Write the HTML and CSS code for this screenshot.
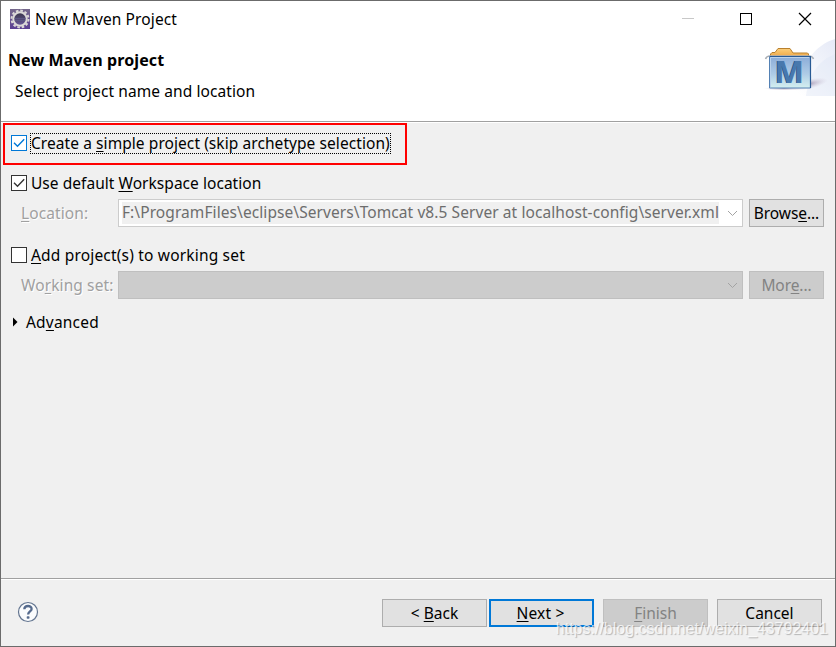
FILE: index.html
```html
<!DOCTYPE html>
<html lang="en">
<head>
    <meta charset="UTF-8" />
    <meta name="viewport" content="width=device-width, initial-scale=1.0" />
    <title>New Maven Project</title>
    <link rel="stylesheet" href="styles.css">
</head>
<body>

    <div class="window">
        <div class="titlebar">
            <svg class="app-icon" width="20" height="20" viewBox="0 0 20 20">
                <defs>
                    <linearGradient id="appBg" x1="0" y1="0" x2="0" y2="1">
                        <stop offset="0" stop-color="#75678b" />
                        <stop offset="1" stop-color="#5b3f93" />
                    </linearGradient>
                    <linearGradient id="appCore" x1="0" y1="0" x2="0" y2="1">
                        <stop offset="0" stop-color="#393449" />
                        <stop offset="1" stop-color="#69599b" />
                    </linearGradient>
                </defs>
                <rect width="20" height="20" fill="url(#appBg)" />
                <circle cx="10" cy="10" r="8.5" fill="none" stroke="#dcd9d8" stroke-width="2" stroke-dasharray="2.6 1.85" />
                <circle cx="10" cy="10" r="6.7" fill="url(#appCore)" stroke="#dcd9d8" stroke-width="2" />
                <path d="M4.500 9.500h11M4.800 11.500h10.400" stroke="#5d5a86" stroke-width=".8" />
            </svg>
            <span class="title">New Maven Project</span>
            <svg class="controls" width="132" height="14" viewBox="0 0 132 14" fill="none" shape-rendering="crispEdges">
                <path d="M0 6.500h12" stroke="#c8c8c8" />
                <rect x="58.500" y="1.500" width="11" height="11" stroke="#000" />
                <path d="M117 1l12 12M129 1l-12 12" stroke="#000" shape-rendering="auto" stroke-width="1.200" />
            </svg>
        </div>

        <div class="banner">
            <div class="banner-text">
                <h1>New Maven project</h1>
                <p>Select project name and location</p>
            </div>
            <svg class="banner-icon" width="80" height="66" viewBox="0 0 80 66">
                <defs>
                    <linearGradient id="swoosh" x1="0" y1="1" x2="1" y2="0">
                        <stop offset=".2" stop-color="#ffffff" />
                        <stop offset="1" stop-color="#e6eaf7" />
                    </linearGradient>
                    <linearGradient id="box" x1="0" y1="0" x2="0" y2="1">
                        <stop offset="0" stop-color="#8bacd8" />
                        <stop offset=".55" stop-color="#aecbe6" />
                        <stop offset="1" stop-color="#d5f0f0" />
                    </linearGradient>
                    <linearGradient id="folder" x1="0" y1="0" x2="0" y2="1">
                        <stop offset="0" stop-color="#fbcf7b" />
                        <stop offset="1" stop-color="#eda23f" />
                    </linearGradient>
                    <radialGradient id="shade">
                        <stop offset="0" stop-color="#8c7c9c" stop-opacity=".7" />
                        <stop offset="1" stop-color="#c9bcd0" stop-opacity="0" />
                    </radialGradient>
                </defs>
                <path d="M22 60C36 55 40 40 52 24C60 12 69 6 79 3V60Z" fill="url(#swoosh)" />
                <path d="M50 60C53 38 62 25 79 18V60Z" fill="#dfe5f5" opacity=".4" />
                <ellipse cx="53" cy="48" rx="19" ry="5" fill="url(#shade)" transform="rotate(-12 53 48)" />
                <ellipse cx="28" cy="52.500" rx="20" ry="2" fill="url(#shade)" />
                <path d="M14.500 21v-3l1.500-1.500h3l3-4h12l3 4.500h14.500l1 1v4z" fill="url(#folder)" stroke="#b9802d" />
                <path d="M9.500 23q1-3 4.500-3h39q3.500 0 4.500 3" fill="none" stroke="#a9afb6" stroke-width="1.500" />
                <path d="M13.500 20.500h41v31.500h-41z" fill="url(#box)" stroke="#5481b4" />
                <path d="M14 20.500h40M54.500 20v32" stroke="#285a94" stroke-width="1.200" />
                <path d="M14.500 51V21.500H53" stroke="#bad2ec" fill="none" />
                <text class="logo-shadow" x="32.500" y="46.500" text-anchor="middle">M</text>
                <text class="logo-letter" x="33.300" y="47" text-anchor="middle">M</text>
            </svg>
        </div>

        <div class="content">
            <div class="highlight">
                <span class="checkbox active"><svg width="14" height="14" viewBox="0 0 14 14"><path d="M2 6.700l3.500 3.500 6.700-7" /></svg></span>
                <span class="focus-label">Create a <u>s</u>imple project (skip archetype selection)</span>
            </div>

            <div class="check-row use-default">
                <span class="checkbox"><svg width="14" height="14" viewBox="0 0 14 14"><path d="M2 6.700l3.500 3.500 6.700-7" /></svg></span>
                <span>Use default <u>W</u>orkspace location</span>
            </div>
            <div class="field-row">
                <span class="field-label"><u>L</u>ocation:</span>
                <div class="combo">
                    <span class="combo-value">F:\ProgramFiles\eclipse\Servers\Tomcat v8.5 Server at localhost-config\server.xml</span>
                    <svg class="chevron" width="11" height="7" viewBox="0 0 11 7"><path d="M1 1l4.500 4.500L10 1" /></svg>
                </div>
                <button class="browse">Brows<u>e</u>...</button>
            </div>

            <div class="check-row working">
                <span class="checkbox"></span>
                <span><u>A</u>dd project(s) to working set</span>
            </div>
            <div class="field-row">
                <span class="field-label">Wo<u>r</u>king set:</span>
                <div class="combo disabled">
                    <svg class="chevron" width="11" height="7" viewBox="0 0 11 7"><path d="M1 1l4.500 4.500L10 1" /></svg>
                </div>
                <button class="browse" disabled>Mor<u>e</u>...</button>
            </div>

            <div class="advanced">
                <svg width="5" height="10" viewBox="0 0 5 10"><path d="M0 0.500l4.500 4.500L0 9.500z" /></svg>
                <span>Ad<u>v</u>anced</span>
            </div>
        </div>

        <div class="footer">
            <svg class="help" width="22" height="22" viewBox="0 0 22 22">
                <circle cx="11" cy="11" r="9.500" />
                <path d="M7.300 8.300C7.500 3.900 14.600 4 14.600 7.900C14.600 10.500 11.100 10.500 11.100 13.600" />
                <rect x="9.700" y="15.300" width="2.800" height="2.500" rx=".8" />
            </svg>
            <button>&lt; <u>B</u>ack</button>
            <button class="primary"><u>N</u>ext &gt;</button>
            <button class="finish" disabled><u>F</u>inish</button>
            <button class="cancel">Cancel</button>
        </div>
        <div class="watermark">https://blog.csdn.net/weixin_43792401</div>
    </div>

</body>
</html>
```

FILE: styles.css
```css
* {
    box-sizing: border-box;
}

body {
    margin: 0;
    font-family: "Noto Sans", "Open Sans", sans-serif;
    font-size: 15.5px;
    line-height: 20px;
    color: #000;
}

.window {
    position: relative;
    display: flex;
    flex-direction: column;
    width: 836px;
    height: 647px;
    border: 1px solid #6b6b6b;
    background: #f0f0f0;
    overflow: hidden;
    white-space: nowrap;
}

u {
    text-underline-offset: 2px;
    text-decoration-thickness: 1px;
    text-decoration-skip-ink: none;
}

.titlebar {
    display: flex;
    align-items: center;
    height: 36px;
    padding: 0 21px 0 9px;
    background: #fff;
}

.title {
    margin-left: 5px;
    flex: 1;
    letter-spacing: 0.12px;
}

.banner {
    display: flex;
    justify-content: space-between;
    height: 85px;
    padding-left: 7px;
    background: #fff;
    border-bottom: 1px solid #a0a0a0;
}

.banner h1 {
    margin: 13px 0 0;
    font-size: 16px;
    line-height: 20px;
    letter-spacing: 0.1px;
}

.banner p {
    margin: 11px 0 0 7px;
    letter-spacing: 0.09px;
}

.banner-icon {
    margin: -1px -1px 0 0;
}

.logo-letter,
.logo-shadow {
    font: bold 31px "Open Sans", sans-serif;
    fill: #4878ad;
}

.logo-shadow {
    fill: #234f7e;
}

.content {
    flex: 1;
    border-top: 1px solid #fff;
    border-bottom: 1px solid #a0a0a0;
}

.highlight {
    display: flex;
    align-items: center;
    width: 404px;
    height: 42px;
    padding: 0 0 2px 6px;
    border: 2px solid #f00;
    margin-left: 2px;
}

.checkbox {
    width: 16px;
    height: 16px;
    border: 1px solid #333;
    background: #fff;
}

.checkbox svg {
    display: block;
}

.checkbox path {
    fill: none;
    stroke: #333;
    stroke-width: 1.4;
}

.checkbox.active {
    border-color: #0078d7;
}

.checkbox.active path {
    stroke: #0078d7;
}

.focus-label {
    width: 361px;
    height: 21px;
    margin-left: 3px;
    border: 1px dotted #000;
    line-height: 19px;
    letter-spacing: 0.07px;
}

.check-row {
    display: flex;
    align-items: center;
    gap: 4px;
    height: 20px;
    padding-left: 10px;
    letter-spacing: 0.04px;
}

.use-default {
    margin-top: 8px;
}

.working {
    margin-top: 18px;
    letter-spacing: 0.18px;
}

.field-row {
    display: flex;
    margin: 6px 11px 0 20px;
    height: 28px;
}

.field-label {
    width: 97px;
    line-height: 28px;
    color: #a0a0a0;
    text-shadow: 1px 1px 0 #fff;
    letter-spacing: 0.1px;
}

.combo {
    display: flex;
    justify-content: space-between;
    align-items: center;
    width: 625px;
    height: 28px;
    margin-right: 6px;
    padding: 0 4px 0 3px;
    border: 1px solid #ccc;
    background: #fff;
}

.combo.disabled {
    justify-content: flex-end;
    background: #ccc;
    border-color: #bfbfbf;
}

.combo-value {
    width: 597px;
    height: 22px;
    line-height: 21px;
    background: #f0f0f0;
    color: #6d6d6d;
    letter-spacing: 0.08px;
}

.chevron {
    fill: none;
    stroke: #a3a3a3;
}

button {
    width: 105px;
    height: 28px;
    padding: 0;
    border: 1px solid #adadad;
    background: #e1e1e1;
    color: #000;
    font: inherit;
}

button:disabled {
    background: #ccc;
    border-color: #bfbfbf;
    color: #838383;
}

.browse {
    width: 75px;
    letter-spacing: -0.08px;
}

.advanced {
    display: flex;
    align-items: center;
    gap: 8px;
    margin: 13px 0 0 12px;
    letter-spacing: 0.2px;
}

.footer {
    display: flex;
    height: 67px;
    padding: 19px 13px 0 16px;
    border-top: 1px solid #fff;
}

.help {
    margin: 2px auto 0 0;
    fill: #fbfcfd;
    stroke: #637590;
    stroke-width: 1.2;
}

.help path {
    fill: none;
    stroke: #566b8d;
    stroke-width: 2.3;
}

.help rect {
    fill: #566b8d;
    stroke: none;
}

.primary {
    margin-left: 2px;
    padding-right: 2px;
    border: 2px solid #0078d7;
    letter-spacing: 0.15px;
}

.finish,
.cancel {
    margin-left: 9px;
}

/* overlaps the bottom button row */
.watermark {
    position: absolute;
    right: 7px;
    bottom: 7px;
    color: rgba(255, 255, 255, 0.75);
    text-shadow: 1px 1px 1px rgba(0, 0, 0, 0.25);
    font-family: "Liberation Sans", sans-serif;
    font-size: 16px;
}
```
